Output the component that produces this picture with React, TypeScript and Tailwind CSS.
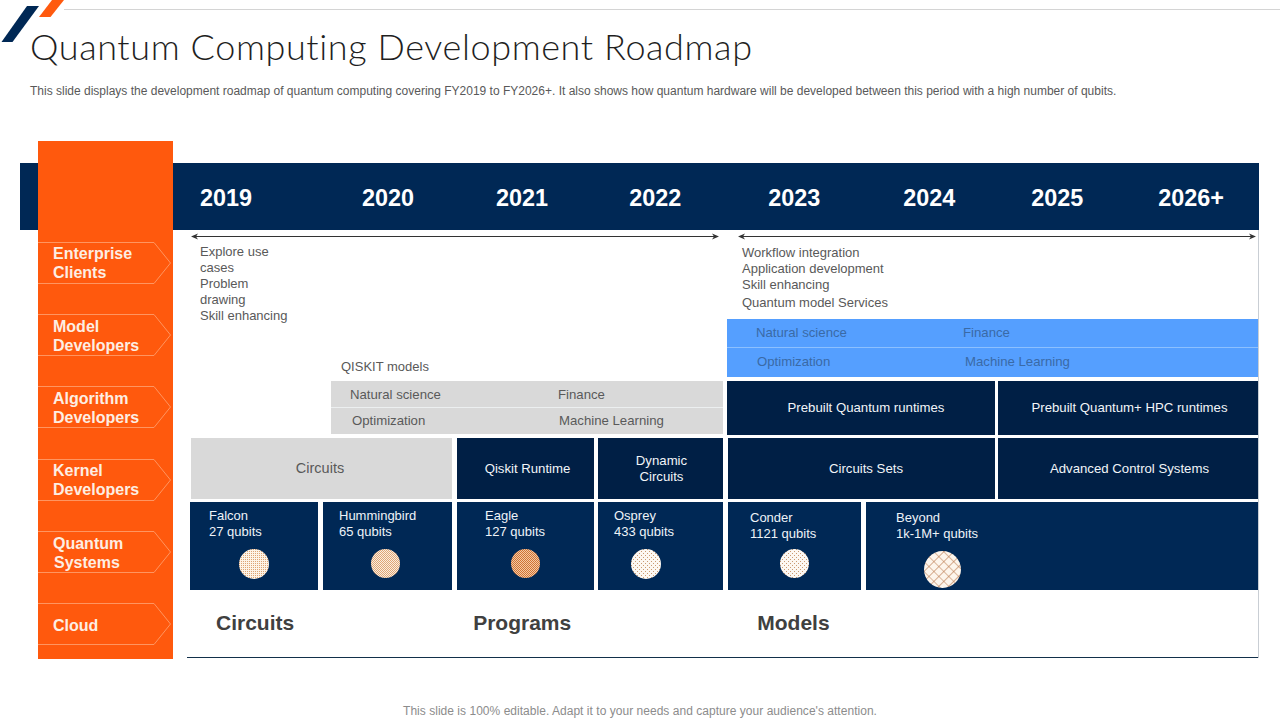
const ARIAL = "font-['Liberation_Sans',Arial,sans-serif]";

const years = [
  { y: "2019", c: "ml-[27px]" },
  { y: "2020", c: "ml-[110px]" },
  { y: "2021", c: "ml-[82px]" },
  { y: "2022", c: "ml-[81px]" },
  { y: "2023", c: "ml-[87px]" },
  { y: "2024", c: "ml-[83px]" },
  { y: "2025", c: "ml-[76px]" },
  { y: "2026+", c: "ml-[75px]" },
];

const people = [
  { l: ["Enterprise", "Clients"], c: "" },
  { l: ["Model", "Developers"], c: "pt-[1px]" },
  { l: ["Algorithm", "Developers"], c: "pt-[1px]" },
  { l: ["Kernel", "Developers"], c: "" },
  { l: ["Quantum", "Systems"], c: "pt-[3px]" },
  { l: ["Cloud"], c: "pt-[3px]" },
];

function Pentagon() {
  return (
    <svg className="absolute left-0 top-0" width="133" height="42" viewBox="0 0 133 42" fill="none">
      <path d="M0 .5H116L132.5 21L116 41.5H0" stroke="#ff9560" strokeWidth="1" />
    </svg>
  );
}

function Arrow({ w }: { w: number }) {
  return (
    <svg width={w} height="9" viewBox={`0 0 ${w} 9`} className="block">
      <path d={`M4 4.5H${w - 4}`} stroke="#333" strokeWidth="1" />
      <path d="M0 4.5L7 1.5L5 4.5L7 7.5Z" fill="#333" />
      <path d={`M${w} 4.5L${w - 7} 1.5L${w - 5} 4.5L${w - 7} 7.5Z`} fill="#333" />
    </svg>
  );
}

function Ball({ kind, d }: { kind: string; d: number }) {
  const id = `p-${kind}`;
  const r = d / 2;
  return (
    <svg width={d} height={d} viewBox={`0 0 ${d} ${d}`} className="block">
      <defs>
        {kind === "a" && (
          <pattern id={id} width="2" height="2" patternUnits="userSpaceOnUse">
            <rect width="2" height="2" fill="#fdf3e6" />
            <rect width="1" height="1" fill="#dda474" />
          </pattern>
        )}
        {kind === "b" && (
          <pattern id={id} width="2" height="2" patternUnits="userSpaceOnUse">
            <rect width="2" height="2" fill="#fbeedf" />
            <rect width="1" height="1" fill="#dfa677" />
            <rect x="1" y="1" width="1" height="1" fill="#dfa677" />
          </pattern>
        )}
        {kind === "c" && (
          <pattern id={id} width="2" height="2" patternUnits="userSpaceOnUse">
            <rect width="2" height="2" fill="#f5c9a3" />
            <rect width="1" height="1" fill="#cf7436" />
            <rect x="1" y="1" width="1" height="1" fill="#cf7436" />
          </pattern>
        )}
        {kind === "d" && (
          <pattern id={id} width="4" height="4" patternUnits="userSpaceOnUse">
            <rect width="4" height="4" fill="#fdf8f2" />
            <rect width="1" height="1" fill="#c99a72" />
            <rect x="2" y="2" width="1" height="1" fill="#c99a72" />
          </pattern>
        )}
        {kind === "e" && (
          <pattern id={id} width="7" height="7" patternUnits="userSpaceOnUse" patternTransform="rotate(45)">
            <rect width="7" height="7" fill="#fdf5ec" />
            <path d="M0 0H7M0 0V7" stroke="#b9774a" strokeWidth="1.2" />
          </pattern>
        )}
      </defs>
      <circle cx={r} cy={r} r={r} fill={`url(#${id})`} />
    </svg>
  );
}

function Chip({ name, qubits, ball, d, w, ml, pl, pt, ballMl, ballMt }: { name: string; qubits: string; ball: string; d: number; w: string; ml: string; pl: string; pt: string; ballMl: string; ballMt: string }) {
  return (
    <div className={`${w} ${ml} ${pl} ${pt} h-full bg-[#002855] text-[#eef3f8] text-[13px] leading-[16px] flex-none flex flex-col`}>
      <div>{name}</div>
      <div>{qubits}</div>
      <div className={`${ballMl} ${ballMt}`}>
        <Ball kind={ball} d={d} />
      </div>
    </div>
  );
}

function Dark({ w, ml, pl, children }: { w: string; ml: string; pl?: string; children: React.ReactNode }) {
  return (
    <div className={`${w} ${ml} ${pl ?? ""} h-full bg-[#001f45] text-[#f2f5f8] text-[13.2px] leading-[16px] flex-none flex items-center justify-center text-center`}>
      {children}
    </div>
  );
}

function Models({ bg, text, line, a, b, c, d, h1, low }: { bg: string; text: string; line: string; a: string; b: string; c: string; d: string; h1: string; low: string }) {
  return (
    <div className={`${bg} ${text} text-[13.2px] flex flex-col`}>
      <div className={`${h1} flex items-center border-b ${line}`}>
        <span className={a}>Natural science</span>
        <span className={b}>Finance</span>
      </div>
      <div className={`flex-1 flex items-center ${low}`}>
        <span className={c}>Optimization</span>
        <span className={d}>Machine Learning</span>
      </div>
    </div>
  );
}

export default function App() {
  return (
    <div className={`relative w-[1280px] h-[720px] overflow-hidden bg-white ${ARIAL} flex flex-col`}>
      <svg className="absolute left-0 top-0" width="70" height="44" viewBox="0 0 70 44">
        <path d="M27 6H39L12.5 42H1.5Z" fill="#002855" />
        <path d="M52 0H64L50.5 17H39Z" fill="#ff5a0f" />
      </svg>
      <div className="h-[10px] ml-[64px] flex-none border-b border-[#d4d4d4]" />
      <div className="h-[30px] flex-none" />
      <h1 className="ml-[30px] h-[12px] flex items-center flex-none whitespace-nowrap font-['Lato',sans-serif] font-light text-[36px] tracking-[0.6px] text-[#1f1f1f]">
        Quantum Computing Development Roadmap
      </h1>
      <div className="h-[33px] flex-none" />
      <p className="ml-[30px] h-[12px] flex items-center flex-none whitespace-nowrap text-[12px] text-[#595959]">
        This slide displays the development roadmap of quantum computing covering FY2019 to FY2026+. It also shows how quantum hardware will be developed between this period with a high number of qubits.
      </p>
      <div className="h-[44px] flex-none" />

      <div className="ml-[20px] flex flex-none items-start">
        <div className="w-[18px] h-[67px] mt-[22px] bg-[#002855] flex-none" />
        <div className="w-[135px] h-[518px] bg-[#ff590d] flex-none flex flex-col pt-[101px] gap-[30.2px]">
          {people.map((p) => (
            <div key={p.l[0]} className={`relative h-[42px] w-[133px] flex-none flex flex-col justify-center pl-[15px] text-[16px] leading-[19px] font-bold text-[#fdeee3] ${p.c}`}>
              <Pentagon />
              {p.l.map((l) => (
                <div key={l} className={l === "Systems" ? "pl-[1px]" : ""}>{l}</div>
              ))}
            </div>
          ))}
        </div>

        <div className="w-[1086px] mt-[22px] flex-none flex flex-col border-r border-[#c9ced4] h-[495px]">
          <div className="h-[67px] flex-none bg-[#002855] flex items-center pt-[4px] text-white font-bold text-[23.4px] mr-[-1px]">
            {years.map((y) => (
              <span key={y.y} className={y.c}>{y.y}</span>
            ))}
          </div>

          <div className="h-[205px] flex-none flex text-[13px] leading-[16px] text-[#595959]">
            <div className="w-[533px] ml-[17px] flex-none flex flex-col">
              <div className="pt-[2px] pl-[1px] h-[14px]">
                <Arrow w={528} />
              </div>
              <div className="pl-[10px] w-[110px]">
                <div>Explore use</div>
                <div>cases</div>
                <div>Problem</div>
                <div>drawing</div>
                <div>Skill enhancing</div>
              </div>
              <div className="mt-[35px] ml-[151px]">QISKIT models</div>
              <Models
                bg="bg-[#d9d9d9] mt-[6px] ml-[141px] h-[53px]"
                text="text-[#595959]"
                line="border-[#eceff0]"
                h1="h-[27px]"
                low=""
                a="ml-[19px] w-[208px] pt-[1px]"
                b="pt-[1px]"
                c="ml-[21px] w-[207px]"
                d=""
              />
            </div>
            <div className="w-[531px] ml-[4px] flex-none flex flex-col">
              <div className="pt-[2px] pl-[11px] h-[15px]">
                <Arrow w={518} />
              </div>
              <div className="pl-[15px]">
                <div>Workflow integration</div>
                <div>Application development</div>
                <div>Skill enhancing</div>
                <div className="mt-[2px]">Quantum model Services</div>
              </div>
              <Models
                bg="bg-[#559fff] mt-[8px] h-[58px]"
                text="text-[#3a6aa6]"
                line="border-[#8cc0ff]"
                h1="h-[29px]"
                low="pb-[2px]"
                a="ml-[29px] w-[207px]"
                b=""
                c="ml-[30px] w-[208px]"
                d=""
              />
              <div className="mt-[4px] h-[54px] flex">
                <Dark w="w-[268px]" ml="" pl="pl-[10px]">Prebuilt Quantum runtimes</Dark>
                <Dark w="w-[260px]" ml="ml-[3px]" pl="pl-[3px]">Prebuilt Quantum+ HPC runtimes</Dark>
              </div>
            </div>
          </div>

          <div className="h-[61px] mt-[3px] flex-none flex">
            <div className="w-[261px] ml-[18px] h-full pr-[3px] bg-[#d9d9d9] text-[#595959] text-[14.5px] flex-none flex items-center justify-center">Circuits</div>
            <Dark w="w-[137px]" ml="ml-[5px]" pl="pl-[4px]">Qiskit Runtime</Dark>
            <Dark w="w-[125px]" ml="ml-[4px]" pl="pl-[2px]"><span>Dynamic<br />Circuits</span></Dark>
            <Dark w="w-[267px]" ml="ml-[5px]" pl="pl-[9px]">Circuits Sets</Dark>
            <Dark w="w-[260px]" ml="ml-[3px]" pl="pl-[3px]">Advanced Control Systems</Dark>
          </div>

          <div className="h-[88px] mt-[3px] flex-none flex">
            <Chip name="Falcon" qubits="27 qubits" ball="a" d={30} w="w-[128px]" ml="ml-[17px]" pl="pl-[19px]" pt="pt-[6px]" ballMl="ml-[30px]" ballMt="mt-[9px]" />
            <Chip name="Hummingbird" qubits="65 qubits" ball="b" d={29} w="w-[129px]" ml="ml-[5px]" pl="pl-[16px]" pt="pt-[6px]" ballMl="ml-[32px]" ballMt="mt-[9px]" />
            <Chip name="Eagle" qubits="127 qubits" ball="c" d={29} w="w-[137px]" ml="ml-[5px]" pl="pl-[28px]" pt="pt-[6px]" ballMl="ml-[26px]" ballMt="mt-[9px]" />
            <Chip name="Osprey" qubits="433 qubits" ball="d" d={30} w="w-[125px]" ml="ml-[4px]" pl="pl-[16px]" pt="pt-[6px]" ballMl="ml-[17px]" ballMt="mt-[9px]" />
            <Chip name="Conder" qubits="1121 qubits" ball="d" d={29} w="w-[133px]" ml="ml-[5px]" pl="pl-[22px]" pt="pt-[8px]" ballMl="ml-[30px]" ballMt="mt-[7px]" />
            <Chip name="Beyond" qubits="1k-1M+ qubits" ball="e" d={37} w="w-[392px]" ml="ml-[5px]" pl="pl-[30px]" pt="pt-[8px]" ballMl="ml-[28px]" ballMt="mt-[9px]" />
          </div>

          <div className="flex-1 ml-[14px] border-b border-[#12304a] flex items-start pt-[20px] text-[21px] leading-[26px] font-bold text-[#404040]">
            <span className="ml-[29px]">Circuits</span>
            <span className="ml-[179px]">Programs</span>
            <span className="ml-[186px]">Models</span>
          </div>
        </div>
      </div>

      <p className="mt-[45px] text-center text-[12px] tracking-[0.03px] leading-[14px] text-[#8c8c8c]">
        This slide is 100% editable. Adapt it to your needs and capture your audience's attention.
      </p>
    </div>
  );
}
